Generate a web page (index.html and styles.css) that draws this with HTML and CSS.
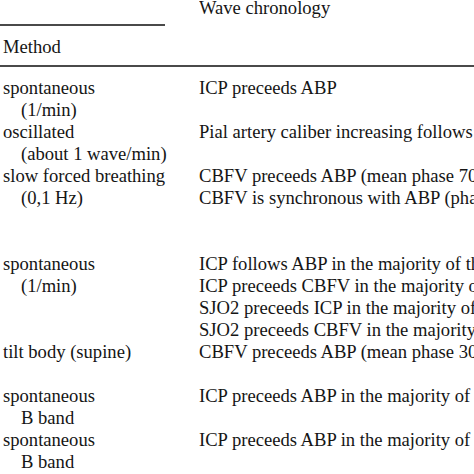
FILE: index.html
```html
<!DOCTYPE html>
<html>
<head>
<meta charset="utf-8">
<link rel="stylesheet" href="styles.css">
</head>
<body>
<div class="table">
  <div class="head1">
    <div class="rule-cell"></div>
    <div class="wave">Wave chronology</div>
  </div>
  <div class="head2">
    <div class="c1">Method</div>
    <div class="c2"></div>
  </div>
  <div class="body">
    <div class="row"><div class="c1">spontaneous</div><div class="c2">ICP preceeds ABP</div></div>
    <div class="row"><div class="c1 ind">(1/min)</div><div class="c2"></div></div>
    <div class="row"><div class="c1">oscillated</div><div class="c2">Pial artery caliber increasing follows ABP</div></div>
    <div class="row"><div class="c1 ind">(about 1 wave/min)</div><div class="c2"></div></div>
    <div class="row"><div class="c1">slow forced breathing</div><div class="c2">CBFV preceeds ABP (mean phase 70°)</div></div>
    <div class="row"><div class="c1 ind">(0,1 Hz)</div><div class="c2">CBFV is synchronous with ABP (phase 0°)</div></div>
    <div class="row"><div class="c1"></div><div class="c2"></div></div>
    <div class="row"><div class="c1"></div><div class="c2"></div></div>
    <div class="row"><div class="c1">spontaneous</div><div class="c2">ICP follows ABP in the majority of the patients</div></div>
    <div class="row"><div class="c1 ind">(1/min)</div><div class="c2">ICP preceeds CBFV in the majority of the patients</div></div>
    <div class="row"><div class="c1"></div><div class="c2">SJO2 preceeds ICP in the majority of the patients</div></div>
    <div class="row"><div class="c1"></div><div class="c2">SJO2 preceeds CBFV in the majority of the patients</div></div>
    <div class="row"><div class="c1">tilt body (supine)</div><div class="c2">CBFV preceeds ABP (mean phase 30°)</div></div>
    <div class="row"><div class="c1"></div><div class="c2"></div></div>
    <div class="row"><div class="c1">spontaneous</div><div class="c2">ICP preceeds ABP in the majority of the patients</div></div>
    <div class="row"><div class="c1 ind">B band</div><div class="c2"></div></div>
    <div class="row"><div class="c1">spontaneous</div><div class="c2">ICP preceeds ABP in the majority of the patients</div></div>
    <div class="row"><div class="c1 ind">B band</div><div class="c2"></div></div>
  </div>
</div>
</body>
</html>
```
FILE: styles.css
```css
html, body {
  margin: 0;
  padding: 0;
  background: #fff;
}
body {
  width: 474px;
  height: 474px;
  overflow: hidden;
  font-family: "Liberation Serif", "Times New Roman", serif;
  font-size: 18.6px;
  color: #151515;
}
.table {
  width: 474px;
}
.head1 {
  display: grid;
  grid-template-columns: 165px 1fr;
  column-gap: 34px;
  height: 26px;
}
.rule-cell {
  height: 24px;
  border-bottom: 2px solid #4a4a4a;
}
.wave {
  line-height: 16px;
  white-space: nowrap;
  overflow: hidden;
}
.head2 {
  display: grid;
  grid-template-columns: 165px 1fr;
  column-gap: 34px;
  padding: 10px 0 7px;
  line-height: 22px;
  border-bottom: 2px solid #4a4a4a;
}
.head2 .c1 {
  padding-left: 3px;
}
.body {
  padding-top: 10px;
}
.row {
  display: grid;
  grid-template-columns: 165px 1fr;
  column-gap: 34px;
  height: 22px;
  line-height: 22px;
}
.c1 {
  padding-left: 3px;
  white-space: nowrap;
}
.c1.ind {
  padding-left: 21px;
}
.c2 {
  white-space: nowrap;
  overflow: hidden;
}
```
